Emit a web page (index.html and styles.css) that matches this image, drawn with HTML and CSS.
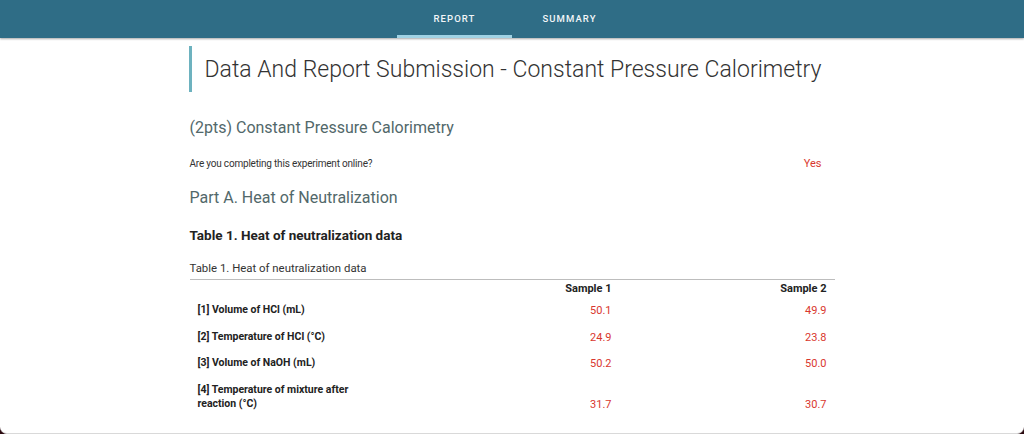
FILE: index.html
```html
<!DOCTYPE html>
<html>
<head>
<meta charset="utf-8">
<link rel="stylesheet" href="styles.css">
</head>
<body>
<div class="page">
  <header class="topbar">
    <nav class="tabs">
      <a class="tab active">REPORT</a>
      <a class="tab">SUMMARY</a>
    </nav>
  </header>
  <main class="content">
    <h1 class="title">Data And Report Submission - Constant Pressure Calorimetry</h1>
    <h2 class="section">(2pts) Constant Pressure Calorimetry</h2>
    <div class="question">
      <span>Are you completing this experiment online?</span>
      <span class="answer">Yes</span>
    </div>
    <h2 class="section part">Part A. Heat of Neutralization</h2>
    <h3 class="table-title">Table 1. Heat of neutralization data</h3>
    <div class="caption">Table 1. Heat of neutralization data</div>
    <table class="data">
      <thead>
        <tr><th class="label"></th><th>Sample 1</th><th>Sample 2</th></tr>
      </thead>
      <tbody>
        <tr><td class="label">[1] Volume of HCl (mL)</td><td>50.1</td><td>49.9</td></tr>
        <tr><td class="label">[2] Temperature of HCl (°C)</td><td>24.9</td><td>23.8</td></tr>
        <tr><td class="label">[3] Volume of NaOH (mL)</td><td>50.2</td><td>50.0</td></tr>
        <tr><td class="label">[4] Temperature of mixture after reaction (°C)</td><td>31.7</td><td>30.7</td></tr>
      </tbody>
    </table>
  </main>
</div>
</body>
</html>
```
FILE: styles.css
```css
html, body {
  margin: 0;
  padding: 0;
  background: #2b0a10;
  font-family: Roboto, "Liberation Sans", sans-serif;
}
.page {
  height: 433px;
  background: #fff;
  border-bottom: 1px solid #d9d9d9;
  border-radius: 0 0 7px 7px;
  overflow: hidden;
}
.topbar {
  height: 38px;
  background: #2f6d86;
  box-shadow: 0 1px 2px rgba(0,0,0,0.35);
  display: flex;
  justify-content: center;
  position: relative;
}
.tabs {
  display: flex;
}
.tab {
  width: 115px;
  height: 38px;
  box-sizing: border-box;
  display: flex;
  align-items: center;
  justify-content: center;
  color: #f2f6f8;
  font-size: 9.5px;
  font-weight: 500;
  letter-spacing: 1.1px;
  padding-bottom: 2px;
}
.tab.active {
  border-bottom: 3px solid #9fd2e4;
  padding-bottom: 0;
  padding-top: 1px;
}
.content {
  width: 645px;
  margin: 0 auto;
}
.title {
  margin: 8px 0 0 -1px;
  border-left: 3px solid #6db2bf;
  height: 46px;
  padding-left: 13px;
  display: flex;
  align-items: center;
  font-size: 23px;
  font-weight: 300;
  color: #333;
}
.section {
  margin: 0;
  font-size: 16px;
  font-weight: 400;
  color: #52686a;
  line-height: 20px;
}
.title + .section {
  margin-top: 26px;
}
.question {
  display: flex;
  justify-content: space-between;
  font-size: 10px;
  letter-spacing: -0.2px;
  color: #333;
  line-height: 14px;
  margin-top: 19px;
  padding-right: 13px;
}
.answer {
  color: #d9372e;
  font-size: 11px;
  letter-spacing: 0;
}
.part {
  margin-top: 17px;
}
.table-title {
  margin: 18px 0 0;
  font-size: 13.5px;
  font-weight: 700;
  color: #222;
  line-height: 18px;
}
.caption {
  margin-top: 17px;
  font-size: 11.4px;
  color: #333;
  line-height: 14px;
  padding-bottom: 4px;
  border-bottom: 1px solid #bdbdbd;
}
.data {
  width: 100%;
  border-collapse: collapse;
  table-layout: fixed;
  font-size: 11px;
}
.data th {
  font-weight: 700;
  color: #222;
  text-align: right;
  padding: 1px 8px 0;
  height: 15px;
}
.data td {
  color: #d9372e;
  text-align: right;
  padding: 0 8px;
  height: 26px;
}
.data td.label {
  text-align: left;
  color: #222;
  font-weight: 700;
  font-size: 10.5px;
  padding-right: 30px;
  line-height: 14px;
}
.data tbody tr:first-child td {
  height: 28px;
}
.data tbody tr:last-child td {
  height: 35px;
  vertical-align: bottom;
}
```
